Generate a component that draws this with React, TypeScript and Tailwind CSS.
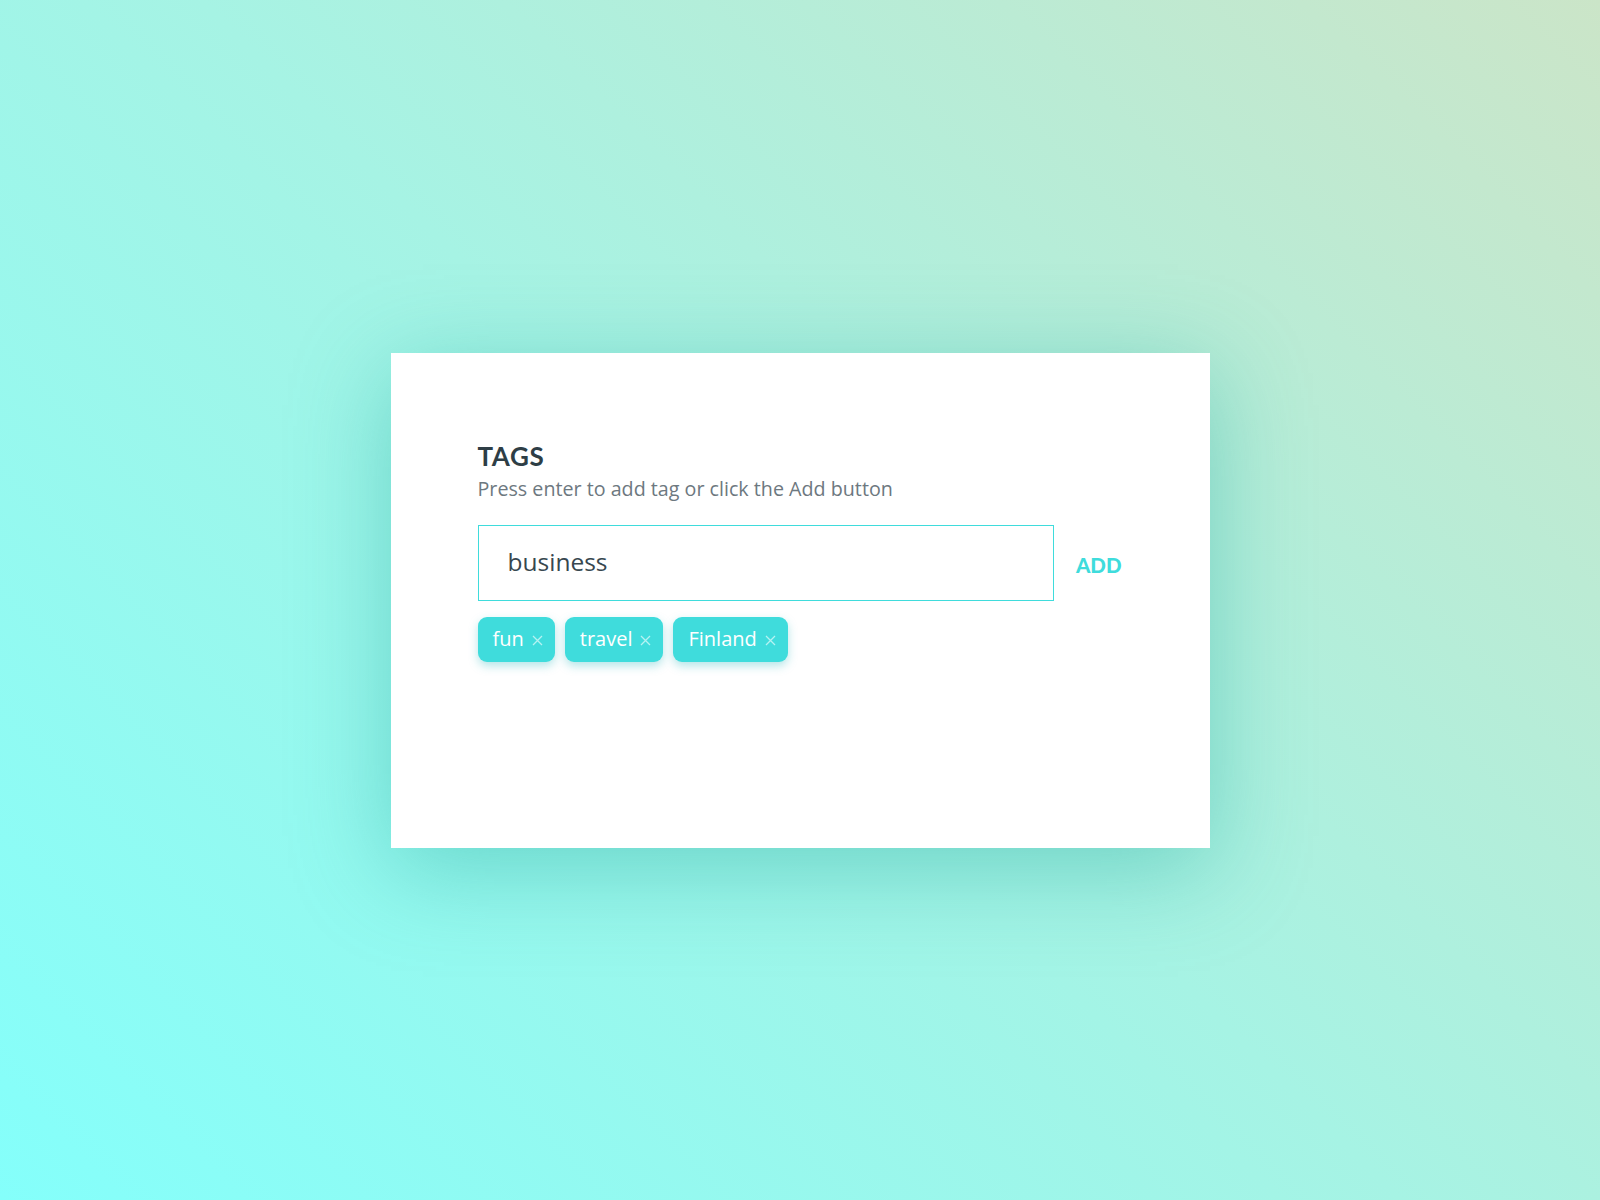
import React from 'react';

const tags = ['fun', 'travel', 'Finland'];

const Tag: React.FC<{ label: string }> = ({ label }) => {
  return (
    <span className="flex items-center h-[45px] pl-[15px] pr-[12px] rounded-[9px] bg-[#3fdcdc] text-white text-[20px] shadow-[0_4px_10px_rgba(40,180,190,0.35)]">
      {label}
      <svg className="ml-[8px] mt-[2px]" width="11" height="11" viewBox="0 0 11 11" fill="none" stroke="#b5f2f2" strokeWidth="1.3">
        <path d="M1 1l9 9M10 1l-9 9" />
      </svg>
    </span>
  );
};

export default function App() {
  return (
    <div
      className="w-[1600px] h-[1200px] flex items-center justify-center bg-[linear-gradient(45deg,#84fffb_0%,#a6f3e4_50%,#cbe5c8_100%)]"
      style={{ fontFamily: '"Open Sans", Lato, sans-serif' }}
    >
      <div className="w-[819px] h-[495px] bg-white shadow-[0_20px_90px_rgba(40,170,160,0.45)] pt-[88px] pl-[87px] pr-[88px]">
        <h2 className="text-[26px] leading-[30px] font-bold text-[#2e3e46] tracking-[0.6px] font-[Lato]">TAGS</h2>
        <p className="mt-[6px] text-[19.7px] leading-[24px] text-[#6d7880]">Press enter to add tag or click the Add button</p>
        <div className="mt-[24px] flex items-center">
          <div className="w-[577px] h-[76px] border border-[#3fdcdc] flex items-center pl-[29px] text-[24.5px] text-[#37474f]">
            business
          </div>
          <button className="ml-[22px] text-[20.5px] font-black text-[#3fdcdc] mt-[5px] font-[Lato]">ADD</button>
        </div>
        <div className="mt-[16px] flex gap-[10px]">
          {tags.map((t) => (
            <Tag key={t} label={t} />
          ))}
        </div>
      </div>
    </div>
  );
}
